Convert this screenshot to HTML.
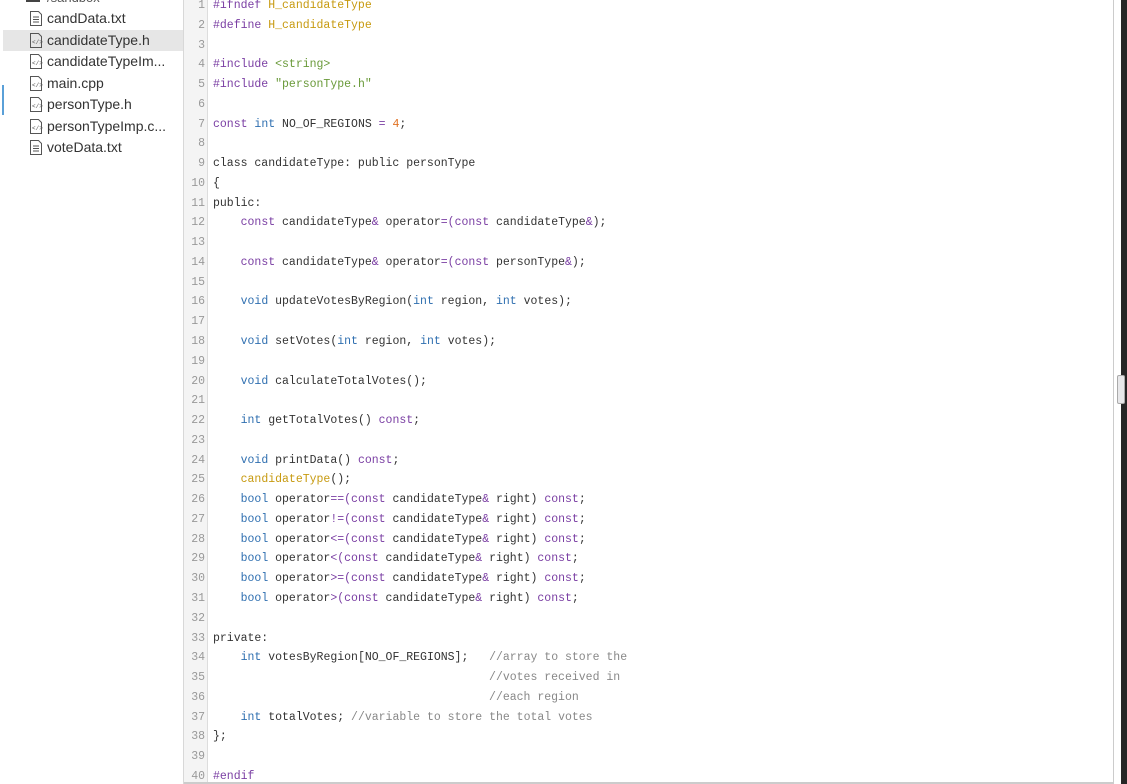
<!DOCTYPE html>
<html><head><meta charset="utf-8"><style>
html,body{margin:0;padding:0;width:1127px;height:784px;overflow:hidden;background:#fff;position:relative}
#side{position:absolute;left:0;top:0;width:183px;height:784px;background:#fff;border-right:1px solid #d8d8d8;font-family:"Liberation Sans",sans-serif;font-size:14px;color:#333}
.it{position:absolute;left:3px;width:180px;height:21px;line-height:21px}
.it span{position:absolute;left:44px}
.it svg{position:absolute;left:26px;top:2px}
.sel{background:#e6e6e6}
#gut{position:absolute;left:184px;top:0;width:23px;height:784px;background:#f4f4f4;border-right:1px solid #ddd}
#code{position:absolute;left:184px;top:-4px;font-family:"Liberation Mono",monospace;font-size:11.5px;line-height:19.77px;white-space:pre;color:#333}
.l{height:19.77px}
.n{display:inline-block;width:21px;text-align:right;color:#999;margin-right:8px}
.k{color:#7a3ea3}.t{color:#2f6fb0}.p{color:#c79a10}.s{color:#6a9a3a}.c{color:#888}.o{color:#e07020}.pp{color:#7a3ea3}
#rb{position:absolute;left:1113px;top:0;width:1px;height:784px;background:#ccc}
#dk{position:absolute;left:1121px;top:0;width:6px;height:784px;background:#262626}
#th{position:absolute;left:1117px;top:375px;width:6px;height:27px;background:#e8e8ea;border:1px solid #aaa;border-radius:2px}
#bot{position:absolute;left:184px;top:782px;width:930px;height:2px;background:#ccc}
</style></head><body>
<div id="side">
<div style="position:absolute;left:26px;top:-8px;width:14px;height:10px;background:#444"></div>
<div style="position:absolute;left:47px;top:-10px;font-size:13px;color:#555">/sandbox</div>
<div style="position:absolute;left:2px;top:85px;width:2px;height:30px;background:#5aa0d8"></div>
<div class="it" style="top:8px"><svg width="14" height="17"><path d="M1.5 1.5h8l3 3v11h-11z" fill="none" stroke="#555"/><path d="M4 7h6M4 9.5h6M4 12h6" stroke="#555"/></svg><span>candData.txt</span></div>
<div class="it sel" style="top:30px"><svg width="14" height="17"><path d="M1.5 1.5h8l3 3v11h-11z" fill="none" stroke="#555"/><text x="3" y="12" font-size="6" fill="#555" font-family="Liberation Mono">&lt;/&gt;</text></svg><span>candidateType.h</span></div>
<div class="it" style="top:51px"><svg width="14" height="17"><path d="M1.5 1.5h8l3 3v11h-11z" fill="none" stroke="#555"/><text x="3" y="12" font-size="6" fill="#555" font-family="Liberation Mono">&lt;/&gt;</text></svg><span>candidateTypeIm...</span></div>
<div class="it" style="top:73px"><svg width="14" height="17"><path d="M1.5 1.5h8l3 3v11h-11z" fill="none" stroke="#555"/><text x="3" y="12" font-size="6" fill="#555" font-family="Liberation Mono">&lt;/&gt;</text></svg><span>main.cpp</span></div>
<div class="it" style="top:94px"><svg width="14" height="17"><path d="M1.5 1.5h8l3 3v11h-11z" fill="none" stroke="#555"/><text x="3" y="12" font-size="6" fill="#555" font-family="Liberation Mono">&lt;/&gt;</text></svg><span>personType.h</span></div>
<div class="it" style="top:116px"><svg width="14" height="17"><path d="M1.5 1.5h8l3 3v11h-11z" fill="none" stroke="#555"/><text x="3" y="12" font-size="6" fill="#555" font-family="Liberation Mono">&lt;/&gt;</text></svg><span>personTypeImp.c...</span></div>
<div class="it" style="top:137px"><svg width="14" height="17"><path d="M1.5 1.5h8l3 3v11h-11z" fill="none" stroke="#555"/><path d="M4 7h6M4 9.5h6M4 12h6" stroke="#555"/></svg><span>voteData.txt</span></div>
</div>
<div id="gut"></div>
<div id="code"><div class="l"><span class="n">1</span><span class="pp">#ifndef</span> <span class="p">H_candidateType</span></div><div class="l"><span class="n">2</span><span class="pp">#define</span> <span class="p">H_candidateType</span></div><div class="l"><span class="n">3</span></div><div class="l"><span class="n">4</span><span class="pp">#include</span> <span class="s">&lt;string&gt;</span></div><div class="l"><span class="n">5</span><span class="pp">#include</span> <span class="s">"personType.h"</span></div><div class="l"><span class="n">6</span></div><div class="l"><span class="n">7</span><span class="k">const</span> <span class="t">int</span> NO_OF_REGIONS <span class="k">=</span> <span class="o">4</span>;</div><div class="l"><span class="n">8</span></div><div class="l"><span class="n">9</span>class candidateType: public personType</div><div class="l"><span class="n">10</span>{</div><div class="l"><span class="n">11</span>public:</div><div class="l"><span class="n">12</span>    <span class="k">const</span> candidateType<span class="k">&amp;</span> operator<span class="k">=(const</span> candidateType<span class="k">&amp;</span>);</div><div class="l"><span class="n">13</span></div><div class="l"><span class="n">14</span>    <span class="k">const</span> candidateType<span class="k">&amp;</span> operator<span class="k">=(const</span> personType<span class="k">&amp;</span>);</div><div class="l"><span class="n">15</span></div><div class="l"><span class="n">16</span>    <span class="t">void</span> updateVotesByRegion(<span class="t">int</span> region, <span class="t">int</span> votes);</div><div class="l"><span class="n">17</span></div><div class="l"><span class="n">18</span>    <span class="t">void</span> setVotes(<span class="t">int</span> region, <span class="t">int</span> votes);</div><div class="l"><span class="n">19</span></div><div class="l"><span class="n">20</span>    <span class="t">void</span> calculateTotalVotes();</div><div class="l"><span class="n">21</span></div><div class="l"><span class="n">22</span>    <span class="t">int</span> getTotalVotes() <span class="k">const</span>;</div><div class="l"><span class="n">23</span></div><div class="l"><span class="n">24</span>    <span class="t">void</span> printData() <span class="k">const</span>;</div><div class="l"><span class="n">25</span>    <span class="p">candidateType</span>();</div><div class="l"><span class="n">26</span>    <span class="t">bool</span> operator<span class="k">==(const</span> candidateType<span class="k">&amp;</span> right) <span class="k">const</span>;</div><div class="l"><span class="n">27</span>    <span class="t">bool</span> operator<span class="k">!=(const</span> candidateType<span class="k">&amp;</span> right) <span class="k">const</span>;</div><div class="l"><span class="n">28</span>    <span class="t">bool</span> operator<span class="k">&lt;=(const</span> candidateType<span class="k">&amp;</span> right) <span class="k">const</span>;</div><div class="l"><span class="n">29</span>    <span class="t">bool</span> operator<span class="k">&lt;(const</span> candidateType<span class="k">&amp;</span> right) <span class="k">const</span>;</div><div class="l"><span class="n">30</span>    <span class="t">bool</span> operator<span class="k">&gt;=(const</span> candidateType<span class="k">&amp;</span> right) <span class="k">const</span>;</div><div class="l"><span class="n">31</span>    <span class="t">bool</span> operator<span class="k">&gt;(const</span> candidateType<span class="k">&amp;</span> right) <span class="k">const</span>;</div><div class="l"><span class="n">32</span></div><div class="l"><span class="n">33</span>private:</div><div class="l"><span class="n">34</span>    <span class="t">int</span> votesByRegion[NO_OF_REGIONS];   <span class="c">//array to store the</span></div><div class="l"><span class="n">35</span>                                        <span class="c">//votes received in</span></div><div class="l"><span class="n">36</span>                                        <span class="c">//each region</span></div><div class="l"><span class="n">37</span>    <span class="t">int</span> totalVotes; <span class="c">//variable to store the total votes</span></div><div class="l"><span class="n">38</span>};</div><div class="l"><span class="n">39</span></div><div class="l"><span class="n">40</span><span class="pp">#endif</span></div></div>
<div id="rb"></div><div id="dk"></div><div id="th"></div><div id="bot"></div>
</body></html>
